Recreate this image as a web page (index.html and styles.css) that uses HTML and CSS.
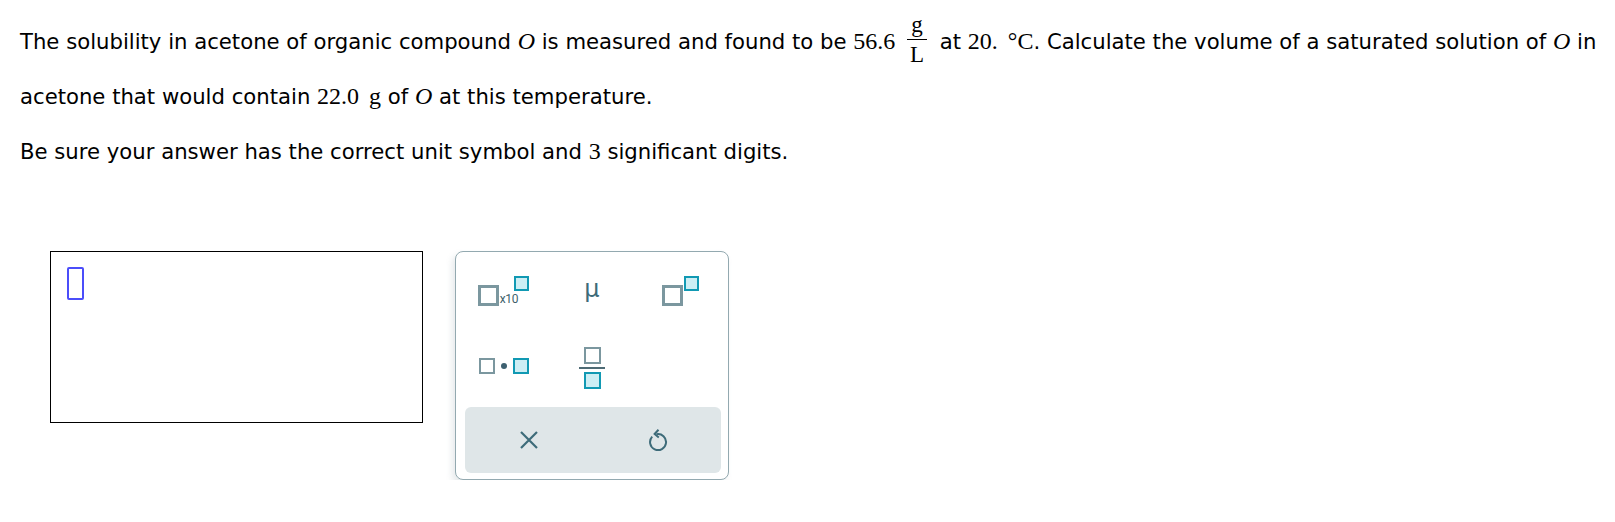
FILE: index.html
```html
<!DOCTYPE html>
<html>
<head>
<meta charset="utf-8">
<link rel="stylesheet" href="styles.css">
</head>
<body>
<div class="page">
  <div class="question">
    <p>The solubility in acetone of organic compound <span class="math it">O</span> is measured and found to be <span class="math">56.6</span> <span class="frac"><span class="num">g</span><span class="den">L</span></span> at <span class="math">20.<span class="unit">°C</span></span>. Calculate the volume of a saturated solution of <span class="math it">O</span> in acetone that would contain <span class="math">22.0<span class="unit">g</span></span> of <span class="math it">O</span> at this temperature.</p>
    <p>Be sure your answer has the correct unit symbol and <span class="math">3</span> significant digits.</p>
  </div>
  <div class="answer-row">
    <div class="answer-box"><span class="cursor"></span></div>
    <div class="palette">
      <div class="tools">
        <button class="tool" title="x10">
          <span class="sci"><span class="sq gray big"></span><span class="x10">x10</span><span class="sq teal sup"></span></span>
        </button>
        <button class="tool mu">μ</button>
        <button class="tool">
          <span class="pow"><span class="sq gray big"></span><span class="sq teal sup"></span></span>
        </button>
        <button class="tool">
          <span class="dotop"><span class="sq gray small"></span><span class="dot"></span><span class="sq teal small"></span></span>
        </button>
        <button class="tool">
          <span class="fracicon"><span class="sq gray mid"></span><span class="bar"></span><span class="sq teal mid"></span></span>
        </button>
        <span class="tool empty"></span>
      </div>
      <div class="actions">
        <button class="act">
          <svg width="20" height="20" viewBox="0 0 20 20"><path d="M2 2 L18 18 M18 2 L2 18" stroke="#3d6b79" stroke-width="2.2" stroke-linecap="butt" fill="none"/></svg>
        </button>
        <button class="act">
          <svg width="22" height="24" viewBox="0 0 22 24"><path d="M6.2 8.6 A8 8 0 1 0 10.5 6.2 L10.5 6.2" stroke="#3d6b79" stroke-width="2" fill="none"/><path d="M12.5 1.8 L8.6 6 L12.8 9.6" stroke="#3d6b79" stroke-width="2" fill="none" stroke-linejoin="miter"/></svg>
        </button>
      </div>
    </div>
  </div>
</div>
</body>
</html>
```

FILE: styles.css
```css
html, body {
  margin: 0;
  padding: 0;
  background: #fff;
}
.page {
  padding: 14px 4px 0 20px;
  font-family: "DejaVu Sans", Verdana, sans-serif;
  font-size: 21.2px;
  color: #000;
}
.question p {
  margin: 0;
  line-height: 55px;
}
.math {
  font-family: "Liberation Serif", "Times New Roman", serif;
  font-size: 24px;
  line-height: 1;
}
.math .unit {
  margin-left: 10px;
}
.it {
  font-style: italic;
}
.frac {
  display: inline-flex;
  flex-direction: column;
  align-items: center;
  vertical-align: middle;
  font-family: "Liberation Serif", "Times New Roman", serif;
  font-size: 23px;
  line-height: 22px;
  margin: 0 5px 0 4px;
  position: relative;
  top: -3px;
}
.frac .num {
  border-bottom: 1px solid #000;
  padding: 0 4px 3px;
}
.frac .den {
  padding: 4px 4px 0;
}
.answer-row {
  display: flex;
  align-items: flex-start;
  gap: 32px;
  margin-top: 72px;
  margin-left: 30px;
}
.answer-box {
  width: 355px;
  height: 155px;
  border: 1px solid #000;
  padding: 15px 0 0 16px;
  box-sizing: content-box;
  font-size: 16px;
}
.cursor {
  display: block;
  width: 13px;
  height: 29px;
  border: 2px solid #4b4dfa;
  border-radius: 2px;
}
.palette {
  width: 256px;
  border: 1px solid #93a9b0;
  border-radius: 8px;
  padding: 1px 8px 6px 8px;
  box-shadow: -3px 4px 6px rgba(120, 140, 150, 0.18);
  background: #fff;
  font-size: 16px;
}
.tools {
  display: grid;
  grid-template-columns: 85px 86px 85px;
  grid-template-rows: 75px 75px;
}
.tool {
  border: 0;
  background: transparent;
  padding: 0;
  margin: 0;
  display: flex;
  align-items: center;
  justify-content: center;
  font-family: "DejaVu Sans", sans-serif;
}
.sq {
  display: block;
  box-sizing: border-box;
  flex: none;
}
.sq.gray {
  border: 2px solid #7b979f;
  background: #fff;
}
.sq.teal {
  border: 2px solid #1199b3;
  background: #cdeef4;
}
.sq.big { width: 21px; height: 21px; border-width: 3px; }
.sq.sup { width: 15px; height: 15px; }
.sq.small { width: 16px; height: 16px; }
.sq.mid { width: 17px; height: 17px; }
.sci, .pow {
  display: flex;
  align-items: flex-start;
}
.sci .big, .pow .big {
  margin-top: 9px;
}
.x10 {
  font-family: "Roboto", "DejaVu Sans", sans-serif;
  font-size: 12px;
  color: #3d5f6a;
  align-self: flex-end;
  line-height: 12px;
  margin: 0 -4px 1px 1px;
  letter-spacing: -0.3px;
}
.pow .sup {
  margin-left: 1px;
}
.sci { margin-left: -6px; }
.pow { margin-left: 6px; }
.mu {
  font-family: "DejaVu Sans", sans-serif;
  font-size: 24px;
  color: #3d6b79;
  padding-bottom: 3px;
}
.dotop {
  display: flex;
  align-items: center;
  gap: 6px;
  margin-left: -6px;
}
.dot {
  width: 6px;
  height: 6px;
  border-radius: 50%;
  background: #3d6070;
}
.fracicon {
  display: flex;
  flex-direction: column;
  align-items: center;
  gap: 3px;
  margin-top: 4px;
}
.fracicon .bar {
  width: 26px;
  height: 2px;
  background: #4e6b75;
}
.actions {
  margin-top: 4px;
  height: 66px;
  background: #dfe6e8;
  border-radius: 6px;
  display: flex;
  margin-left: 1px;
  margin-right: -1px;
}
.act {
  flex: 1;
  border: 0;
  background: transparent;
  display: flex;
  align-items: center;
  justify-content: center;
  padding: 0;
}
```
